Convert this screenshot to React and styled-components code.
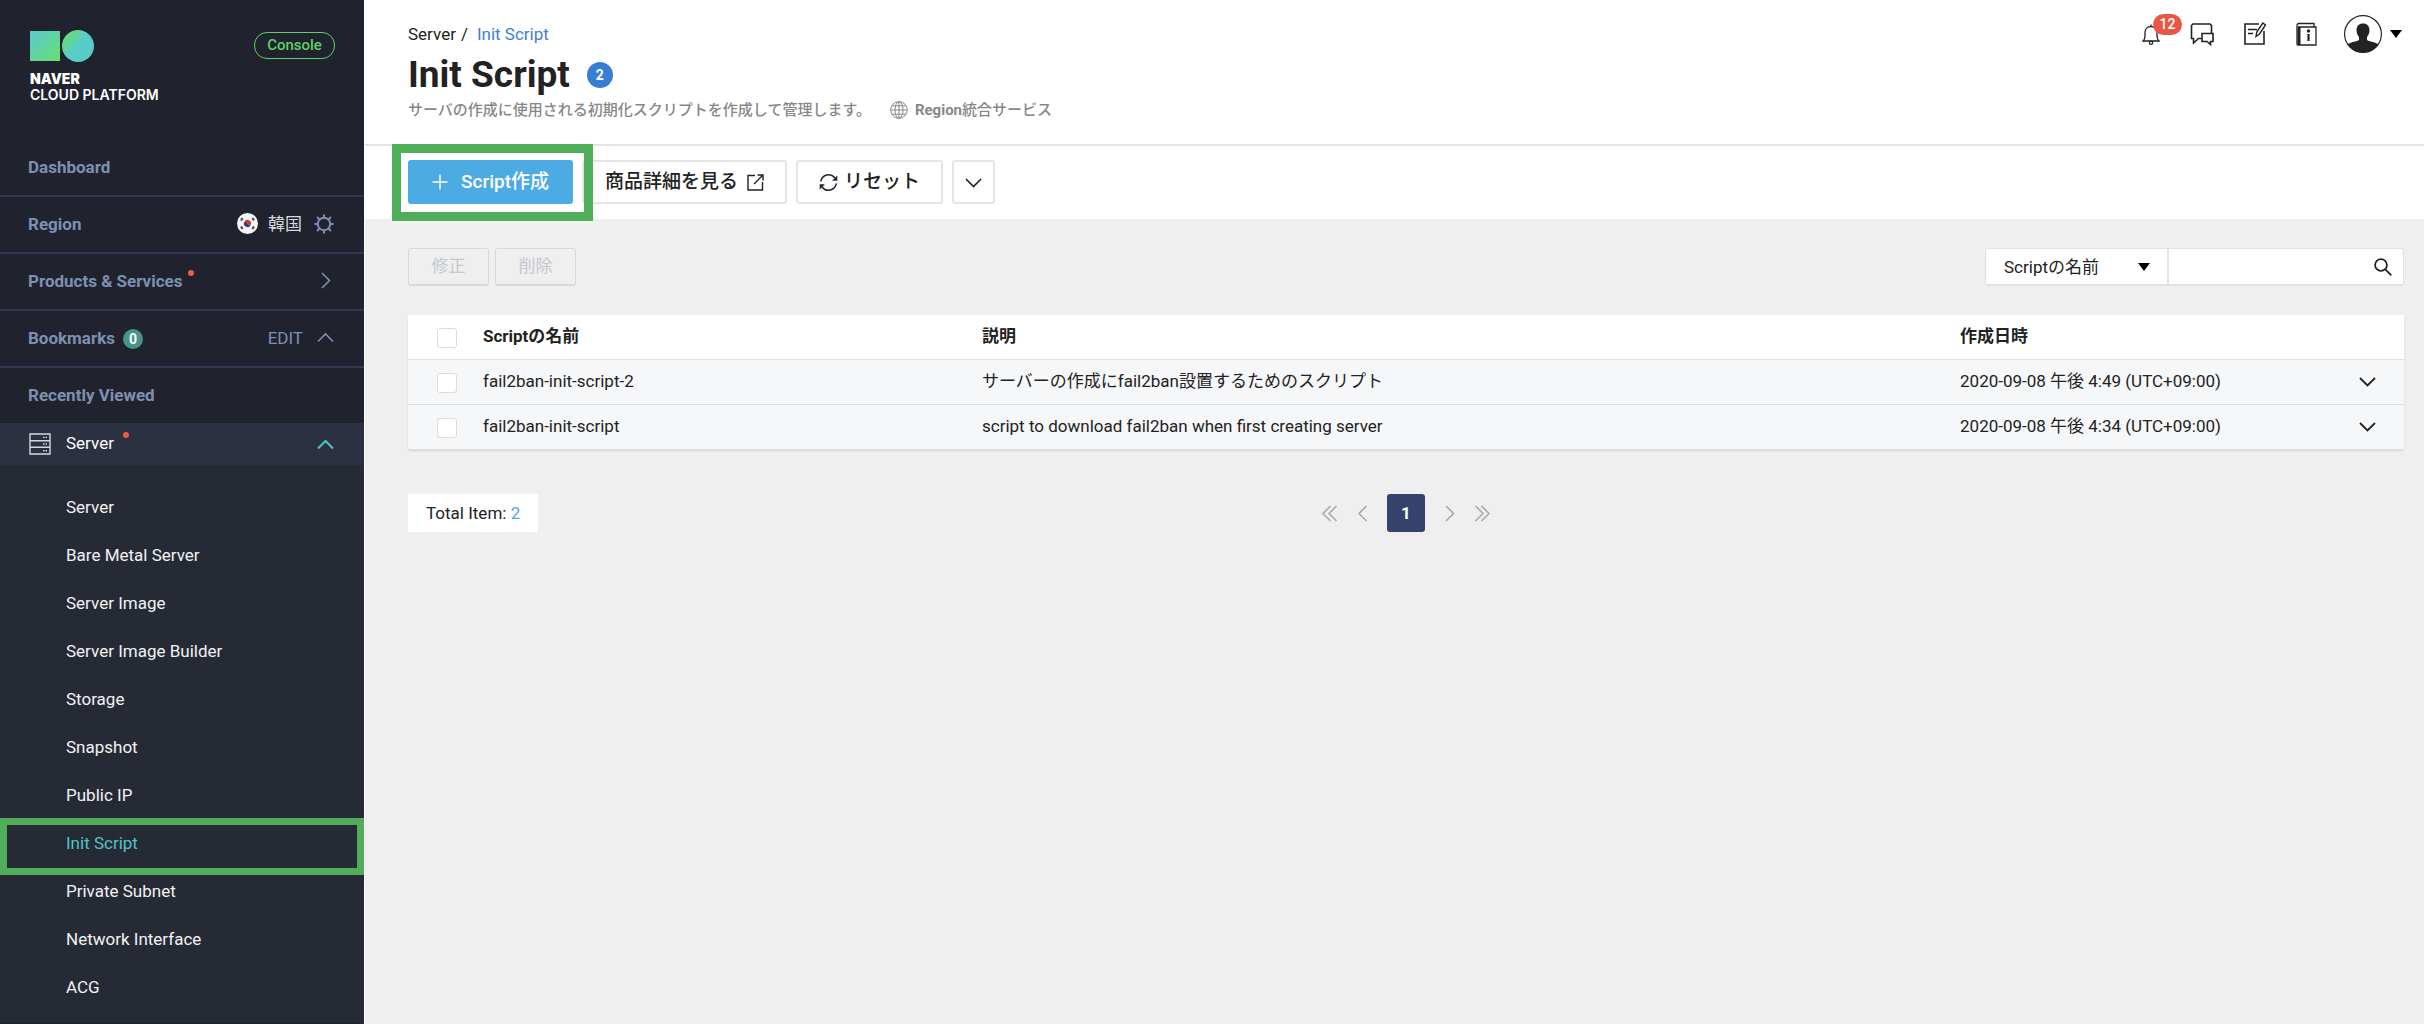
import { useState } from 'react';
import styled, { createGlobalStyle } from 'styled-components';

const GlobalStyle = createGlobalStyle`
  *,
  *::before,
  *::after {
    box-sizing: border-box;
  }

  body {
    margin: 0;
    background-color: #efefef;
    color: #222;
    font-family: Roboto, 'Noto Sans CJK JP', sans-serif;
    font-size: 17px;
    line-height: 24px;
  }

  button,
  input,
  select {
    font: inherit;
    color: inherit;
  }

  button {
    cursor: pointer;
  }

  a {
    color: inherit;
    text-decoration: none;
  }

  svg {
    display: block;
    flex: none;
  }
`;

const MENU = [
  'Server',
  'Bare Metal Server',
  'Server Image',
  'Server Image Builder',
  'Storage',
  'Snapshot',
  'Public IP',
  'Init Script',
  'Private Subnet',
  'Network Interface',
  'ACG',
];

const SCRIPTS = [
  {
    name: 'fail2ban-init-script-2',
    description: 'サーバーの作成にfail2ban設置するためのスクリプト',
    createdAt: '2020-09-08 午後 4:49 (UTC+09:00)',
  },
  {
    name: 'fail2ban-init-script',
    description: 'script to download fail2ban when first creating server',
    createdAt: '2020-09-08 午後 4:34 (UTC+09:00)',
  },
];

/* icons */

const CHEVRONS = {
  up: 'M1 12.5 8.500 5 16 12.500',
  down: 'M1 5 8.500 12.500 16 5',
  left: 'M12.500 1 5 8.500 12.500 16',
  right: 'M5 1 12.500 8.500 5 16',
};

const Chevron = ({ to, width = 1.6 }) => (
  <svg width="17" height="17" viewBox="0 0 17 17" fill="none" stroke="currentColor" strokeWidth={width}>
    <path d={CHEVRONS[to]} />
  </svg>
);

const DoubleChevron = ({ to }) => (
  <svg width="17" height="17" viewBox="0 0 17 17" fill="none" stroke="currentColor" strokeWidth="1.6">
    <path
      d={
        to === 'left'
          ? 'M9.500 1 2 8.500 9.500 16M15.500 1 8 8.500 15.500 16'
          : 'M7.500 1 15 8.500 7.500 16M1.500 1 9 8.500 1.500 16'
      }
    />
  </svg>
);

const Caret = () => (
  <svg width="12" height="8" viewBox="0 0 12 8" fill="#000">
    <path d="M0 0h12L6 8z" />
  </svg>
);

const LogoMark = () => (
  <svg width="65" height="34" viewBox="0 0 65 34">
    <defs>
      <linearGradient id="squareFill" x1="0" y1="0" x2="1" y2="1">
        <stop offset="0.1" stopColor="#5accc8" />
        <stop offset="1" stopColor="#6adf6c" />
      </linearGradient>
      <linearGradient id="circleFill" x1="0.1" y1="0.1" x2="0.8" y2="0.7">
        <stop offset="0" stopColor="#6adf6c" />
        <stop offset="0.6" stopColor="#5accc8" />
      </linearGradient>
    </defs>
    <rect y="2" width="30" height="30" fill="url(#squareFill)" />
    <circle cx="48" cy="17" r="16" fill="url(#circleFill)" />
  </svg>
);

const Flag = () => (
  <svg width="21" height="21" viewBox="0 0 21 21">
    <circle cx="10.5" cy="10.5" r="10.5" fill="#f5f5f5" />
    <path d="M7.300 9a3.500 3.500 0 0 1 6.400 3c-1 1-2.300.3-3.200-1.500S8 8.300 7.300 9z" fill="#d8352c" />
    <path d="M7.300 9a3.500 3.500 0 0 0 6.400 3c-1 1-2.300.3-3.200-1.500S8 8.300 7.300 9z" fill="#2a3b9a" />
    <path d="m4 7.500 1.600-2.600M15.400 16.100l1.600-2.600M4 13.500l1.600 2.600M15.400 4.900 17 7.500" stroke="#444" strokeWidth="2" />
  </svg>
);

const Gear = () => (
  <svg width="20" height="20" viewBox="0 0 20 20" fill="none" stroke="#7e90b2" strokeWidth="2">
    <circle cx="10" cy="10" r="6.200" />
    <path d="M10 .5v3.700M10 15.800v3.700M.5 10h3.700M15.800 10h3.700M3 3l2.600 2.600M14.400 14.400l2.600 2.600M3 17l2.600-2.600M14.400 5.600 17 3" />
  </svg>
);

const ServerIcon = () => (
  <svg width="22" height="22" viewBox="0 0 22 22" fill="none" stroke="#d6d8dd" strokeWidth="1.400">
    <path d="M1 1h20v20H1zM1 7.700h20M1 14.300h20" />
    <path d="M14 4.400h1.500M16.500 4.400H18M14 11h1.500M16.500 11H18M14 17.700h1.500M16.500 17.700H18" />
  </svg>
);

const Globe = () => (
  <svg width="18" height="18" viewBox="0 0 18 18" fill="none" stroke="#888" strokeWidth="1">
    <circle cx="9" cy="9" r="8.300" />
    <ellipse cx="9" cy="9" rx="4" ry="8.300" />
    <path d="M9 .7v16.600M.7 9h16.600M2 4.800h14M2 13.200h14" />
  </svg>
);

const Bell = () => (
  <svg width="18" height="22" viewBox="0 0 18 22" fill="none" stroke="#222" strokeWidth="1.300">
    <path d="M1 18h16c-1.600-1.500-2-3-2-5V9.500C15 6 12.500 3.500 9 3.500S3 6 3 9.500V13c0 2-.4 3.500-2 5zM9 3.500V1.500" />
    <circle cx="9" cy="19.700" r="1.600" fill="#fff" />
  </svg>
);

const Chat = () => (
  <svg width="24" height="24" viewBox="0 0 24 24" fill="none" stroke="#222" strokeWidth="1.600">
    <path d="M11.500 16.500H8.500L3.500 21v-4.500H1.500V3.500L3 2h17l1.500 1.500v7.500" />
    <path d="M12 11.500h11v8h-2.500v3l-3.500-3h-5z" />
  </svg>
);

const Note = () => (
  <svg width="22" height="24" viewBox="0 0 22 24" fill="none" stroke="#222" strokeWidth="1.600">
    <path d="M15 2H1v20h19V9" />
    <path d="M4 7.500h9M4 11.500h5" />
    <path d="m12 14.500.8-4.500 6-9L21.500 3l-6 9z" strokeWidth="1.400" />
  </svg>
);

const Book = () => (
  <svg width="21" height="24" viewBox="0 0 21 24" fill="none" stroke="#222" strokeWidth="1.300">
    <path d="M18 4.500V1.500H3C1.500 1.500 1 2.500 1 4v18c0 .7.500 1 1 1h18V5H2" />
    <path d="M3 5v18" strokeWidth="3" />
    <path d="M12.500 12v7" strokeWidth="2.200" />
    <circle cx="12.500" cy="9" r="1" fill="#222" />
  </svg>
);

const Avatar = () => (
  <svg width="38" height="38" viewBox="0 0 38 38">
    <defs>
      <clipPath id="avatarClip">
        <circle cx="19" cy="19" r="18.500" />
      </clipPath>
    </defs>
    <g clipPath="url(#avatarClip)" fill="#222">
      <path d="M19 8.500c4 0 6.500 2.700 6.500 6.500 0 3-1.200 5.500-2.500 7v3c2 1.500 6.500 1.500 11 4v10H4V29c4.500-2.500 9-2.500 11-4v-3c-1.300-1.500-2.500-4-2.500-7 0-3.800 2.500-6.500 6.500-6.500z" />
    </g>
    <circle cx="19" cy="19" r="18.400" fill="none" stroke="#222" strokeWidth="1.200" />
  </svg>
);

const Plus = () => (
  <svg width="16" height="16" viewBox="0 0 16 16" fill="none" stroke="#fff" strokeWidth="1.500">
    <path d="M8 .5v15M.5 8h15" />
  </svg>
);

const External = () => (
  <svg width="17" height="17" viewBox="0 0 17 17" fill="none" stroke="#222" strokeWidth="1.400">
    <path d="M8 1.500H1V16h14.500V8M10.500 1H16v5.500M16 1 7 10" />
  </svg>
);

const Refresh = () => (
  <svg width="19" height="19" viewBox="0 0 19 19" fill="none" stroke="#222" strokeWidth="1.600">
    <path d="M1.700 8.500C2.200 4.500 5.500 1.700 9.500 1.700c2.700 0 5 1.300 6.300 3.300M17.300 10.500c-.5 4-3.800 6.800-7.800 6.800-2.700 0-5-1.300-6.300-3.300" />
    <path d="M18.300 2.500v5.200h-5.200zM.7 16.500v-5.200h5.200z" fill="#222" stroke="none" />
  </svg>
);

const SearchIcon = () => (
  <svg width="18" height="18" viewBox="0 0 18 18" fill="none" stroke="#222" strokeWidth="1.800">
    <circle cx="7" cy="7" r="5.900" />
    <path d="m11.300 11.300 6 6" />
  </svg>
);

/* sidebar */

const Page = styled.div`
  display: flex;
  min-height: 100vh;
`;

const Sidebar = styled.aside`
  flex: 0 0 364px;
  background-color: #20232d;
  color: #7e90b2;
`;

const Brand = styled.div`
  display: flex;
  justify-content: space-between;
  align-items: flex-start;
  height: 140px;
  padding: 29px 29px 0 30px;
`;

const BrandName = styled.div`
  margin-top: 8px;
  color: #fff;
  font-family: Inter, sans-serif;
  font-size: 14px;
  font-weight: 600;
  line-height: 16px;

  strong {
    display: block;
    font-weight: 900;
  }
`;

const ConsoleLink = styled.a`
  width: 81px;
  margin-top: 3px;
  border: 1px solid #5fd068;
  border-radius: 13px;
  color: #5fd068;
  font-size: 15px;
  font-weight: 500;
  line-height: 25px;
  text-align: center;
`;

const NavRow = styled.div`
  display: flex;
  align-items: center;
  gap: 14px;
  height: 57px;
  padding: 0 30px 2px 28px;
  border-bottom: 2px solid ${({ $last }) => ($last ? 'transparent' : '#2f394f')};
`;

const NavTitle = styled.a`
  display: flex;
  align-items: center;
  margin-right: auto;
  font-weight: 700;
`;

const RegionName = styled.span`
  margin: 0 -2px 0 -4px;
  color: #d5d8de;
`;

const NewDot = styled.i`
  align-self: flex-start;
  width: 6px;
  height: 6px;
  margin: 1px 0 0 ${({ $gap }) => $gap}px;
  border-radius: 50%;
  background-color: #ee5a47;
`;

const BookmarkCount = styled.span`
  width: 20px;
  height: 20px;
  margin: 2px 0 0 8px;
  border-radius: 50%;
  background-color: #45958a;
  color: #fff;
  font-size: 14px;
  line-height: 20px;
  text-align: center;
`;

const PlainButton = styled.button`
  display: flex;
  align-items: center;
  padding: 0;
  border: 0;
  background: none;
`;

const ServiceHead = styled.div`
  display: flex;
  align-items: center;
  height: 42px;
  margin-top: -2px;
  padding: 0 30px 0 29px;
  background-color: #2c3142;
  color: #fff;

  a {
    display: flex;
    margin: 0 auto 2px 15px;
  }

  button {
    color: #4ec3cb;
  }
`;

const Submenu = styled.ul`
  margin: 0;
  padding: 18px 0 12px;
  background-color: #262a35;
  list-style: none;
`;

const SubmenuItem = styled.li`
  position: relative;
  color: ${({ $active }) => ($active ? '#4ec3cb' : '#f2f2f4')};

  a {
    display: block;
    padding-left: 66px;
    line-height: 48px;
  }
`;

const Highlight = styled.span`
  position: absolute;
  inset: ${({ $inset }) => $inset};
  border: ${({ $width }) => $width}px solid #50ae5b;
  pointer-events: none;
`;

/* main column */

const Main = styled.main`
  flex: 1;
  min-width: 0;
  border-left: 1px solid #fff;
`;

const Header = styled.header`
  display: flex;
  justify-content: space-between;
  height: 146px;
  padding: 0 22px 0 43px;
  border-bottom: 2px solid #e5e5e5;
  background-color: #fff;
`;

const Breadcrumb = styled.nav`
  display: flex;
  gap: 5px;
  padding-top: 22px;

  a:last-child {
    margin-left: 4px;
    color: #3c80d8;
  }
`;

const Title = styled.h1`
  display: flex;
  align-items: center;
  gap: 17px;
  margin: 7px 0 0;
  font-size: 37px;
  font-weight: 700;
  line-height: 44px;
`;

const TitleCount = styled.span`
  width: 26px;
  height: 26px;
  border-radius: 50%;
  background-color: #387fd3;
  color: #fff;
  font-size: 14px;
  line-height: 26px;
  text-align: center;
`;

const Description = styled.p`
  display: flex;
  align-items: center;
  gap: 7px;
  margin: 0;
  color: #888;
  font-size: 15px;
  font-weight: 500;
  line-height: 26px;

  svg {
    margin-left: 12px;
  }
`;

const Tools = styled.div`
  display: flex;
  align-items: center;
  gap: 30px;
  height: 38px;
  margin-top: 15px;
`;

const Alerts = styled(PlainButton)`
  position: relative;
`;

const AlertCount = styled.span`
  position: absolute;
  top: -9px;
  left: 11px;
  width: 29px;
  height: 21px;
  border-radius: 11px;
  background-color: #e95744;
  color: #fff;
  font-size: 14px;
  font-weight: 500;
  line-height: 21px;
`;

const Account = styled(PlainButton)`
  gap: 8px;
  margin-left: -3px;
`;

const Toolbar = styled.div`
  display: flex;
  align-items: flex-start;
  gap: 9px;
  height: 73px;
  padding: 14px 43px 0;
  background-color: #fff;
`;

const PrimaryWrap = styled.div`
  position: relative;
  z-index: 1;
`;

const ToolButton = styled.button`
  display: flex;
  justify-content: center;
  align-items: center;
  gap: ${({ $gap }) => $gap || 6}px;
  height: 44px;
  padding: 0 ${({ $pad }) => $pad || 21}px;
  border: 2px solid ${({ $primary }) => ($primary ? '#4dabe3' : '#e4e5e5')};
  border-radius: 3px;
  background-color: ${({ $primary }) => ($primary ? '#4dabe3' : '#fff')};
  color: ${({ $primary }) => ($primary ? '#fff' : '#222')};
  font-size: 19px;
  font-weight: 500;
  white-space: nowrap;
`;

const Content = styled.section`
  padding: 29px 20px 40px 43px;
`;

const Filters = styled.div`
  display: flex;
  gap: 6px;
  margin-bottom: 29px;
`;

const RowAction = styled.button`
  width: 81px;
  height: 38px;
  padding: 0 0 2px;
  border: 1px solid #d3d9df;
  border-bottom-width: 2px;
  border-radius: 3px;
  background: none;
  color: #c4c9cf;
`;

const Search = styled.form`
  display: flex;
  height: 38px;
  margin-left: auto;
  border: 1px solid #dfe0e1;
  border-bottom-width: 2px;
  border-radius: 3px;
  background-color: #fff;
`;

const Field = styled.label`
  position: relative;
  display: flex;
  border-right: 2px solid #e4e5e6;

  select {
    width: 181px;
    padding: 0 40px 0 18px;
    border: 0;
    outline: 0;
    appearance: none;
    background: none;
  }

  svg {
    position: absolute;
    top: 14px;
    right: 17px;
    pointer-events: none;
  }
`;

const Keyword = styled.input`
  width: 205px;
  padding: 0 12px;
  border: 0;
  outline: 0;
  background: none;
`;

const SearchButton = styled(PlainButton)`
  padding-right: 11px;
`;

const ScriptTable = styled.table`
  width: 100%;
  border-collapse: separate;
  border-spacing: 0;
  border-radius: 3px;
  background-color: #f6f7f9;
  box-shadow: 0 1px 2px rgba(0, 0, 0, 0.12);
  table-layout: fixed;

  th,
  td {
    height: 45px;
    padding: 0 0 2px;
    border-bottom: 1px solid #dddfe1;
    text-align: left;
  }

  th {
    background-color: #fff;
    font-weight: 700;
  }

  th:first-child,
  td:first-child {
    width: 75px;
    padding-left: 29px;
  }

  th:nth-child(2) {
    width: 25%;
  }

  th:nth-child(3) {
    width: 49%;
  }

  th:last-child {
    width: 45px;
  }
`;

const Check = styled.input`
  display: block;
  width: 20px;
  height: 20px;
  margin: 4px 0 0;
  border: 1px solid #dcdddd;
  border-radius: 3px;
  appearance: none;
  background-color: #fff;

  &:checked {
    background-color: #4dabe3;
  }
`;

const Footer = styled.footer`
  display: grid;
  grid-template-columns: 1fr auto 1fr;
  align-items: center;
  margin-top: 44px;
`;

const Total = styled.span`
  justify-self: start;
  padding: 0 18px;
  background-color: #fff;
  line-height: 38px;

  b {
    color: #4dabe3;
    font-weight: 400;
  }
`;

const Pager = styled.nav`
  display: flex;
  align-items: center;
  gap: 16px;

  button {
    color: #aaa;
  }
`;

const CurrentPage = styled.span`
  width: 38px;
  border-radius: 3px;
  background-color: #35426b;
  color: #fff;
  font-weight: 700;
  line-height: 38px;
  text-align: center;
`;

const SideNav = () => (
  <Sidebar>
    <Brand>
      <div>
        <LogoMark />
        <BrandName>
          <strong>NAVER</strong>
          CLOUD PLATFORM
        </BrandName>
      </div>
      <ConsoleLink href="#console">Console</ConsoleLink>
    </Brand>
    <NavRow>
      <NavTitle href="#dashboard">Dashboard</NavTitle>
    </NavRow>
    <NavRow>
      <NavTitle href="#region">Region</NavTitle>
      <Flag />
      <RegionName>韓国</RegionName>
      <PlainButton aria-label="Region settings">
        <Gear />
      </PlainButton>
    </NavRow>
    <NavRow>
      <NavTitle href="#products">
        Products &amp; Services
        <NewDot $gap={5} />
      </NavTitle>
      <PlainButton aria-label="Open products">
        <Chevron to="right" />
      </PlainButton>
    </NavRow>
    <NavRow>
      <NavTitle href="#bookmarks">
        Bookmarks
        <BookmarkCount>0</BookmarkCount>
      </NavTitle>
      <PlainButton>EDIT</PlainButton>
      <PlainButton aria-label="Collapse bookmarks">
        <Chevron to="up" />
      </PlainButton>
    </NavRow>
    <NavRow $last>
      <NavTitle href="#recent">Recently Viewed</NavTitle>
    </NavRow>
    <ServiceHead>
      <ServerIcon />
      <a href="#server">
        Server
        <NewDot $gap={9} />
      </a>
      <PlainButton aria-label="Collapse Server">
        <Chevron to="up" width={2} />
      </PlainButton>
    </ServiceHead>
    <Submenu>
      {MENU.map((item) => {
        const active = item === 'Init Script';
        return (
          <SubmenuItem key={item} $active={active}>
            <a href="#menu">{item}</a>
            {active && <Highlight $inset="-1px 0 -8px" $width={7} />}
          </SubmenuItem>
        );
      })}
    </Submenu>
  </Sidebar>
);

const PageHeader = () => (
  <Header>
    <div>
      <Breadcrumb>
        <a href="#server">Server</a>
        <span>/</span>
        <a href="#init-script">Init Script</a>
      </Breadcrumb>
      <Title>
        Init Script
        <TitleCount>2</TitleCount>
      </Title>
      <Description>
        サーバの作成に使用される初期化スクリプトを作成して管理します。
        <Globe />
        <span>
          <strong>Region</strong>統合サービス
        </span>
      </Description>
    </div>
    <Tools>
      <Alerts aria-label="Notifications">
        <Bell />
        <AlertCount>12</AlertCount>
      </Alerts>
      <PlainButton aria-label="Messages">
        <Chat />
      </PlainButton>
      <PlainButton aria-label="Notes">
        <Note />
      </PlainButton>
      <PlainButton aria-label="Guide">
        <Book />
      </PlainButton>
      <Account aria-label="Account">
        <Avatar />
        <Caret />
      </Account>
    </Tools>
  </Header>
);

const App = () => {
  const [keyword, setKeyword] = useState('');

  return (
    <Page>
      <GlobalStyle />
      <SideNav />
      <Main>
        <PageHeader />
        <Toolbar>
          <PrimaryWrap>
            <ToolButton $primary $gap={13} $pad={22}>
              <Plus />
              Script作成
            </ToolButton>
            <Highlight $inset="-16px -20px -17px -16px" $width={9} />
          </PrimaryWrap>
          <ToolButton $gap={9}>
            商品詳細を見る
            <External />
          </ToolButton>
          <ToolButton>
            <Refresh />
            リセット
          </ToolButton>
          <ToolButton $pad={11} aria-label="More">
            <Chevron to="down" />
          </ToolButton>
        </Toolbar>
        <Content>
          <Filters>
            <RowAction disabled>修正</RowAction>
            <RowAction disabled>削除</RowAction>
            <Search onSubmit={(e) => e.preventDefault()}>
              <Field>
                <select aria-label="検索項目">
                  <option>Scriptの名前</option>
                </select>
                <Caret />
              </Field>
              <Keyword
                aria-label="検索"
                value={keyword}
                onChange={(e) => setKeyword(e.target.value)}
              />
              <SearchButton type="submit" aria-label="検索">
                <SearchIcon />
              </SearchButton>
            </Search>
          </Filters>
          <ScriptTable>
            <thead>
              <tr>
                <th>
                  <Check type="checkbox" aria-label="Select all" />
                </th>
                <th>Scriptの名前</th>
                <th>説明</th>
                <th>作成日時</th>
                <th aria-label="Details" />
              </tr>
            </thead>
            <tbody>
              {SCRIPTS.map(({ name, description, createdAt }) => (
                <tr key={name}>
                  <td>
                    <Check type="checkbox" aria-label={name} />
                  </td>
                  <td>{name}</td>
                  <td>{description}</td>
                  <td>{createdAt}</td>
                  <td>
                    <PlainButton aria-label={`${name} details`}>
                      <Chevron to="down" width={1.8} />
                    </PlainButton>
                  </td>
                </tr>
              ))}
            </tbody>
          </ScriptTable>
          <Footer>
            <Total>
              Total Item: <b>2</b>
            </Total>
            <Pager aria-label="Pages">
              <PlainButton aria-label="First page">
                <DoubleChevron to="left" />
              </PlainButton>
              <PlainButton aria-label="Previous page">
                <Chevron to="left" />
              </PlainButton>
              <CurrentPage>1</CurrentPage>
              <PlainButton aria-label="Next page">
                <Chevron to="right" />
              </PlainButton>
              <PlainButton aria-label="Last page">
                <DoubleChevron to="right" />
              </PlainButton>
            </Pager>
          </Footer>
        </Content>
      </Main>
    </Page>
  );
};

export default App;
